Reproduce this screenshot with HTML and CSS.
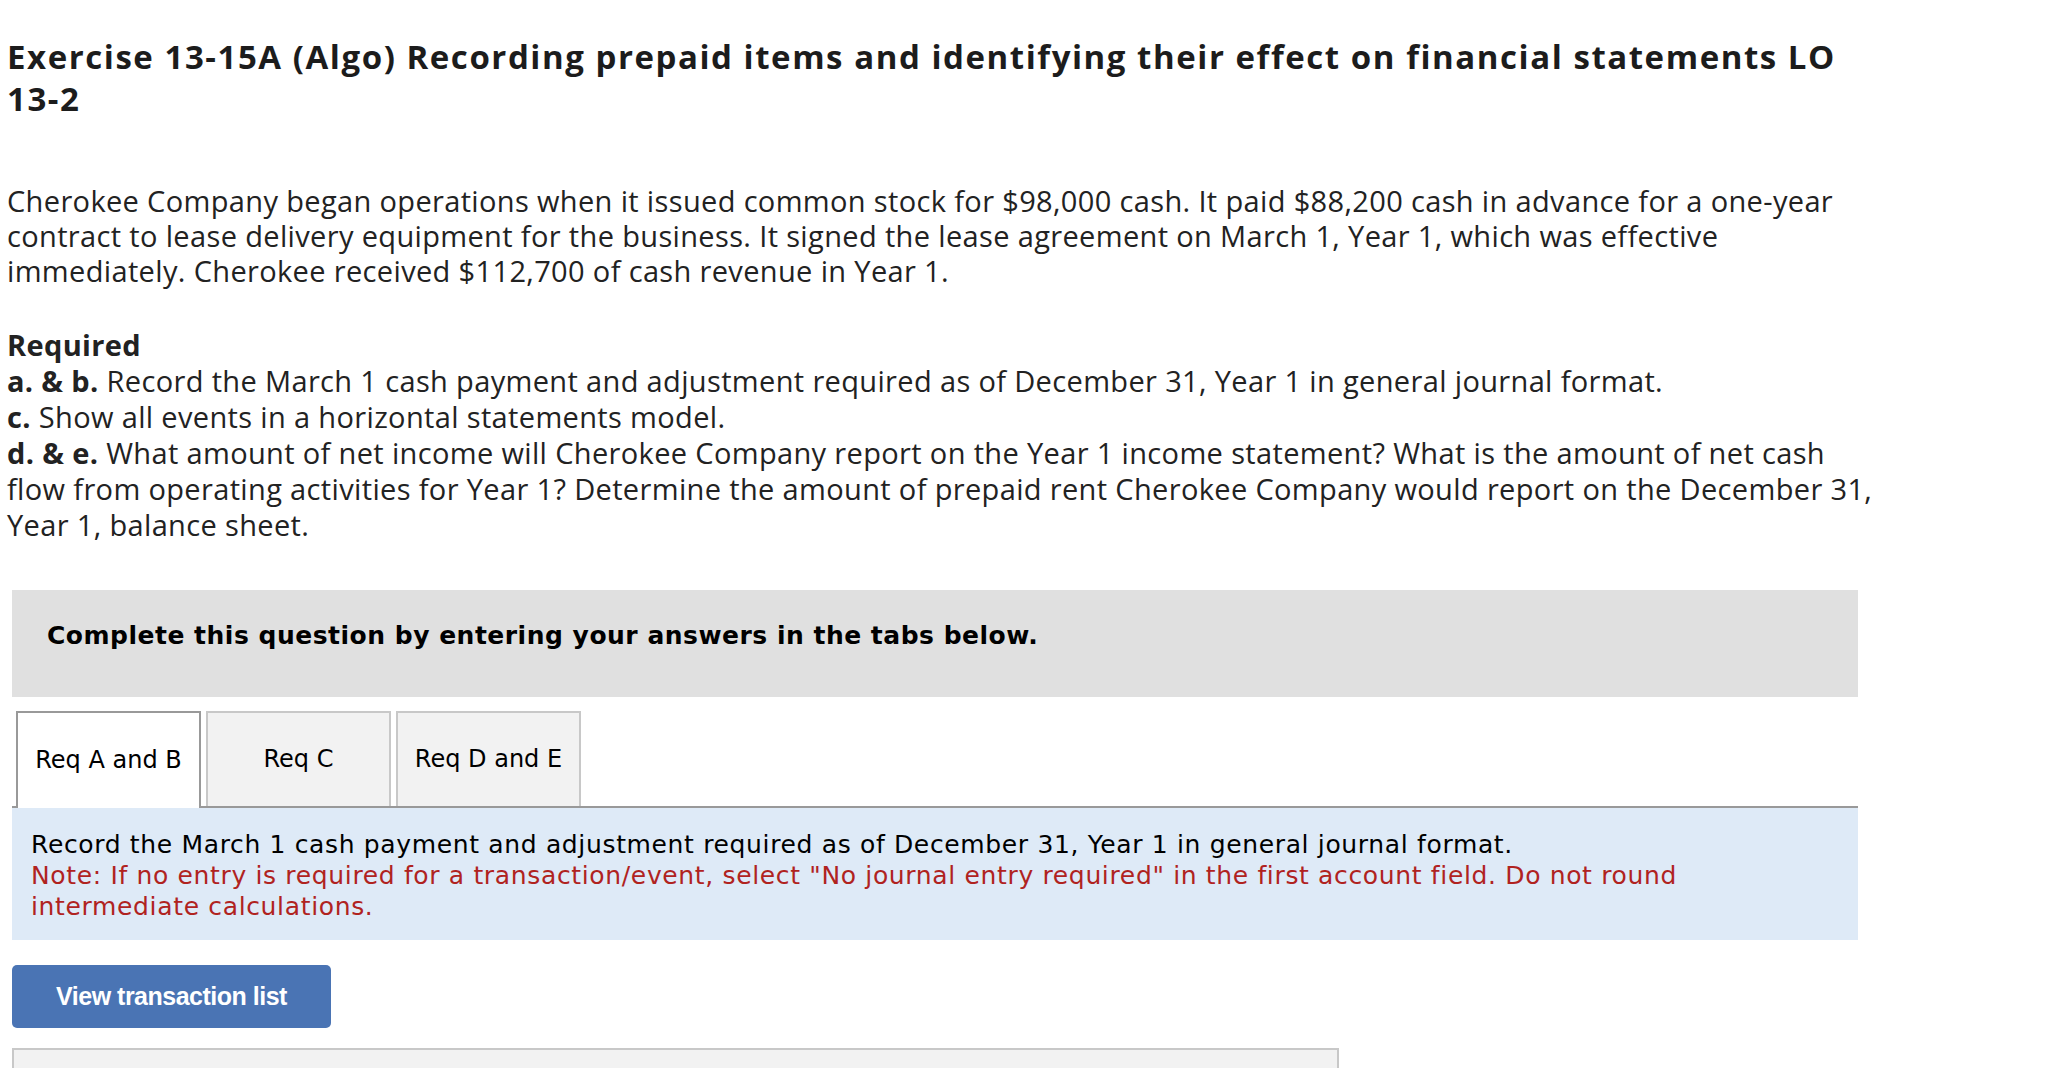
FILE: index.html
```html
<!DOCTYPE html>
<html lang="en">
<head>
<meta charset="utf-8">
<title>Exercise 13-15A (Algo)</title>
<link rel="stylesheet" href="styles.css">
</head>
<body>
<div class="page">
  <h1 class="title">Exercise 13-15A (Algo) Recording prepaid items and identifying their effect on financial statements LO<br>13-2</h1>

  <p class="intro">Cherokee Company began operations when it issued common stock for $98,000 cash. It paid $88,200 cash in advance for a one-year<br>contract to lease delivery equipment for the business. It signed the lease agreement on March 1, Year 1, which was effective<br>immediately. Cherokee received $112,700 of cash revenue in Year 1.</p>

  <div class="required">
    <p class="req-head">Required</p>
    <p><b>a. &amp; b.</b> Record the March 1 cash payment and adjustment required as of December 31, Year 1 in general journal format.</p>
    <p><b>c.</b> Show all events in a horizontal statements model.</p>
    <p><b>d. &amp; e.</b> What amount of net income will Cherokee Company report on the Year 1 income statement? What is the amount of net cash<br>flow from operating activities for Year 1? Determine the amount of prepaid rent Cherokee Company would report on the December 31,<br>Year 1, balance sheet.</p>
  </div>

  <div class="instructions">Complete this question by entering your answers in the tabs below.</div>

  <div class="tabs">
    <div class="tab active">Req A and B</div>
    <div class="tab">Req C</div>
    <div class="tab">Req D and E</div>
  </div>

  <div class="panel">
    <p>Record the March 1 cash payment and adjustment required as of December 31, Year 1 in general journal format.</p>
    <p class="note">Note: If no entry is required for a transaction/event, select "No journal entry required" in the first account field. Do not round<br>intermediate calculations.</p>
  </div>

  <button class="btn" type="button">View transaction list</button>

  <div class="journal"></div>
</div>
</body>
</html>
```

FILE: styles.css
```css
* { box-sizing: border-box; }

html, body {
  margin: 0;
  padding: 0;
  background: #ffffff;
}

body {
  overflow: hidden;
}

.page {
  padding: 36px 0 0 7px;
  width: 2062px;
  font-family: "Open Sans", "Lato", sans-serif;
  color: #222222;
  white-space: nowrap;
}

.title {
  margin: 0;
  font-size: 33px;
  line-height: 42px;
  font-weight: 700;
  letter-spacing: 1.55px;
  color: #1c1c1c;
}

.intro {
  margin: 63px 0 0;
  font-size: 29px;
  line-height: 35px;
  letter-spacing: 0.35px;
}

.required {
  margin-top: 38.5px;
  font-size: 29px;
  line-height: 36px;
  letter-spacing: 0.35px;
}

.required p {
  margin: 0;
}

.required b,
.req-head {
  font-weight: 700;
}

.instructions {
  margin: 47px 0 0 5px;
  width: 1846px;
  height: 107px;
  padding: 31px 0 0 35px;
  background: #e0e0e0;
  font-family: "DejaVu Sans", "Verdana", sans-serif;
  font-weight: 700;
  font-size: 25px;
  line-height: 30px;
  letter-spacing: 0.5px;
  color: #000000;
}

.tabs {
  margin: 14px 0 0 5px;
  width: 1846px;
  display: flex;
  gap: 5px;
  padding-left: 4px;
  border-bottom: 2px solid #999999;
}

.tab {
  width: 185px;
  height: 95px;
  display: flex;
  align-items: center;
  justify-content: center;
  background: #f2f2f2;
  border: 2px solid #c8c8c8;
  border-bottom: 0;
  font-family: "DejaVu Sans", "Verdana", sans-serif;
  font-size: 24px;
  color: #000000;
}

.tab.active {
  background: #ffffff;
  border-color: #999999;
  margin-bottom: -2px;
  height: 97px;
}

.panel {
  margin: 0 0 0 5px;
  width: 1846px;
  padding: 21.5px 19px 17.5px;
  background: #deeaf7;
  font-family: "DejaVu Sans", "Verdana", sans-serif;
  font-size: 25px;
  line-height: 31px;
  letter-spacing: 0.65px;
  color: #000000;
}

.panel p {
  margin: 0;
}

.panel .note {
  color: #b0231f;
}

.btn {
  display: block;
  margin: 25px 0 0 5px;
  width: 319px;
  height: 63px;
  border: 0;
  border-radius: 5px;
  background: #4a74b4;
  color: #ffffff;
  font-family: "Liberation Sans", Arial, sans-serif;
  font-weight: 700;
  font-size: 25px;
  letter-spacing: -0.5px;
  cursor: pointer;
}

.journal {
  margin: 20px 0 0 5px;
  width: 1327px;
  height: 60px;
  border: 2px solid #c8c8c8;
  background: #f2f2f2;
}
```
